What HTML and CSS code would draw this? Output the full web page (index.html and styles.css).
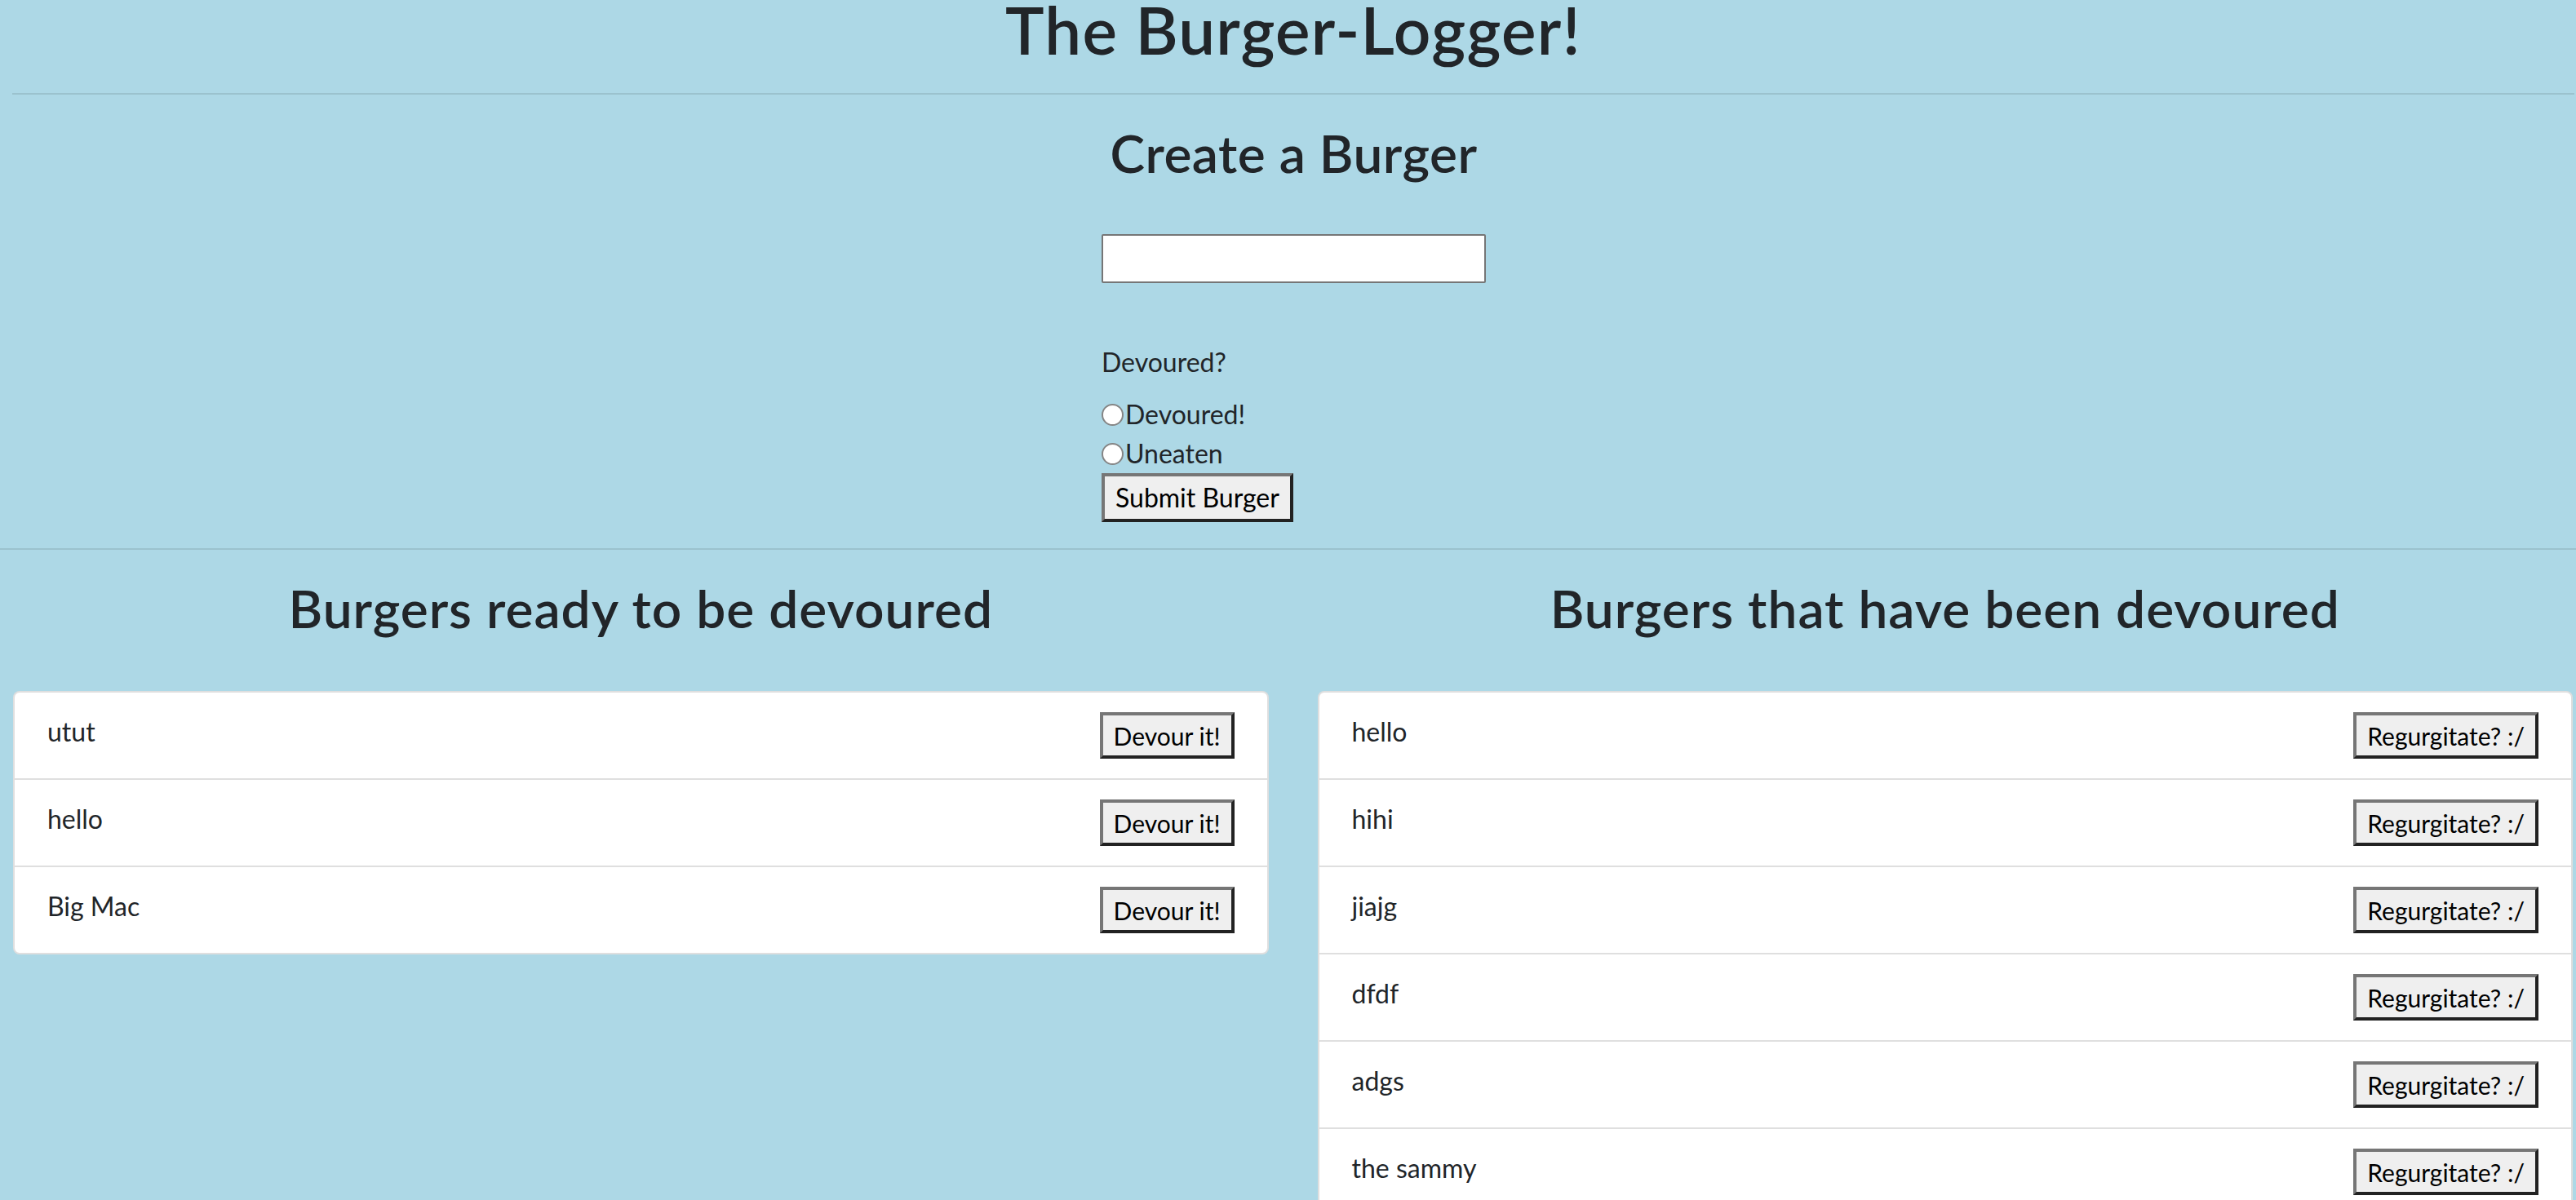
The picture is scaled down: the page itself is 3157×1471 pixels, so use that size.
FILE: index.html
```html
<!DOCTYPE html>
<html lang="en">
 <head>
  <meta charset="UTF-8" />
  <meta name="viewport" content="width=device-width, initial-scale=1.0" />
  <title>Burger Logger</title>
  <link rel="stylesheet" href="styles.css">
 </head>
 <body>
  <!-- header -->
  <div class="head">
   <h1 class="site-title">The Burger-Logger!</h1>
   <hr class="rule" />
  </div>

  <!-- create form -->
  <div class="create">
   <h2>Create a Burger</h2>
   <form class="burger-form">
    <input class="name-input" type="text" name="burger_name" />
    <p class="form-label">Devoured?</p>
    <label class="radio-row"><input type="radio" name="devoured" value="1" />Devoured!</label>
    <label class="radio-row"><input type="radio" name="devoured" value="0" />Uneaten</label>
    <button class="btn" type="submit">Submit Burger</button>
   </form>
  </div>

  <hr class="rule rule-full" />

  <!-- burger lists -->
  <div class="lists">
   <div class="col">
    <h2>Burgers ready to be devoured</h2>
    <ul class="list">
     <li class="list-item"><span>utut</span><button class="btn btn-small">Devour it!</button></li>
     <li class="list-item"><span>hello</span><button class="btn btn-small">Devour it!</button></li>
     <li class="list-item"><span>Big Mac</span><button class="btn btn-small">Devour it!</button></li>
    </ul>
   </div>
   <div class="col">
    <h2>Burgers that have been devoured</h2>
    <ul class="list">
     <li class="list-item"><span>hello</span><button class="btn btn-small">Regurgitate? :/</button></li>
     <li class="list-item"><span>hihi</span><button class="btn btn-small">Regurgitate? :/</button></li>
     <li class="list-item"><span>jiajg</span><button class="btn btn-small">Regurgitate? :/</button></li>
     <li class="list-item"><span>dfdf</span><button class="btn btn-small">Regurgitate? :/</button></li>
     <li class="list-item"><span>adgs</span><button class="btn btn-small">Regurgitate? :/</button></li>
     <li class="list-item"><span>the sammy</span><button class="btn btn-small">Regurgitate? :/</button></li>
    </ul>
   </div>
  </div>
 </body>
</html>
```

FILE: styles.css
```css
* {
 margin: 0;
 padding: 0;
 box-sizing: border-box;
}
body {
 background-color: lightblue;
 color: #212529;
 font-family: "Segoe UI", Lato, "Noto Sans", sans-serif;
 font-size: 32px;
 line-height: 48px;
}
h1,
h2 {
 font-weight: 600;
 text-align: center;
 letter-spacing: 1px;
}
.head {
 padding: 0 2px 0 15px;
}
.site-title {
 font-size: 80px;
 line-height: 72px;
 letter-spacing: 1.3px;
}
.rule {
 border: 0;
 border-top: 2px solid rgba(0, 0, 0, 0.1);
 margin-top: 42px;
}
.rule-full {
 margin-top: 32px;
}
.create {
 padding: 0 2px 0 16px;
 text-align: center;
}
.create h2 {
 font-size: 64px;
 line-height: 77px;
 margin-top: 33px;
 letter-spacing: 0.5px;
}
.burger-form {
 display: inline-block;
 width: 471px;
 text-align: left;
 margin-top: 61px;
}
.name-input {
 display: block;
 width: 100%;
 height: 60px;
 border: 2px solid #767676;
 border-radius: 2px;
 background-color: #fff;
}
.form-label {
 margin: 73px 0 16px;
}
.radio-row {
 display: flex;
 align-items: center;
}
.radio-row input {
 appearance: none;
 width: 27px;
 height: 27px;
 margin: 0 2px 0 0;
 border: 2px solid #858585;
 border-radius: 50%;
 background-color: #fff;
}
.btn {
 display: block;
 height: 60px;
 padding: 0 13px;
 border: 4px solid;
 border-color: #767676 #222 #222 #767676;
 background-color: #efefef;
 color: #000;
 font-family: inherit;
 font-size: 32px;
 line-height: 48px;
}
.btn-small {
 height: 57px;
 font-size: 30px;
}
.lists {
 display: grid;
 grid-template-columns: 1fr 1fr;
 gap: 60px;
 padding: 0 4px 0 16px;
}
.col h2 {
 font-size: 64px;
 line-height: 77px;
 margin: 33px 0 63px;
}
.list {
 list-style: none;
 background-color: #fff;
 border: 2px solid rgba(0, 0, 0, 0.125);
 border-radius: 8px;
}
.list-item {
 display: flex;
 justify-content: space-between;
 align-items: flex-start;
 padding: 24px 40px 24px;
 border-bottom: 2px solid rgba(0, 0, 0, 0.125);
}
.list-item:last-child {
 border-bottom: 0;
}
```
